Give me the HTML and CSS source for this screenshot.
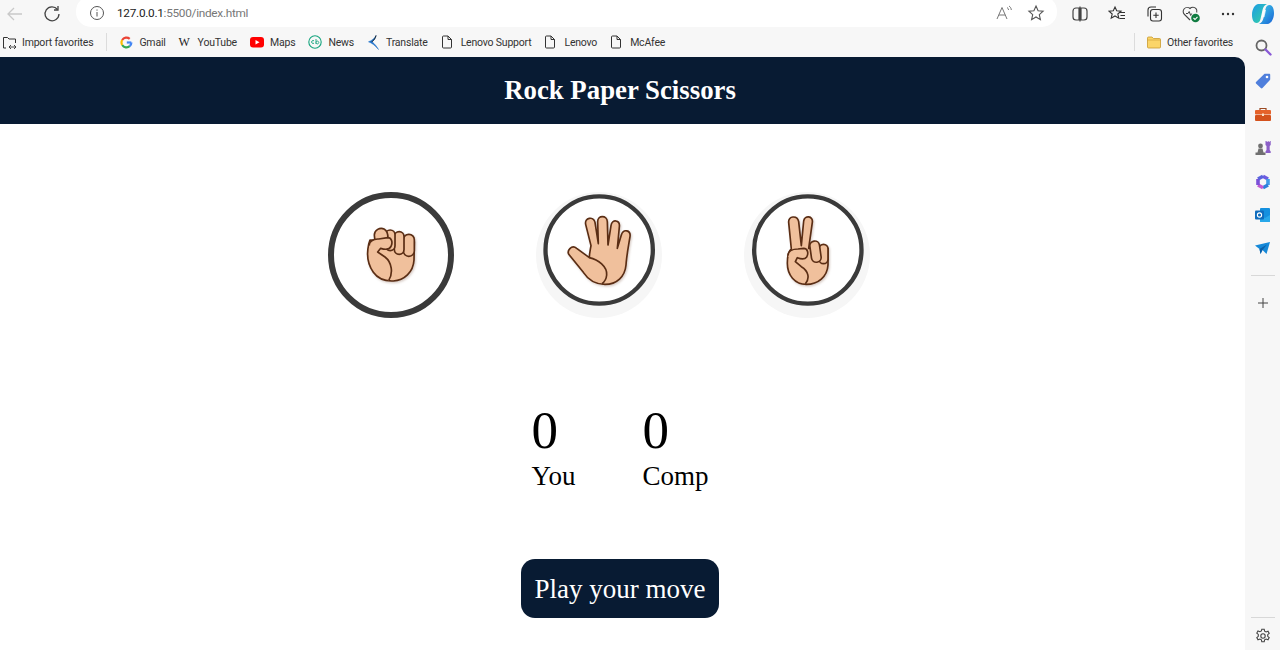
FILE: index.html
```html
<!DOCTYPE html>
<html>
<head>
  <title>Rock Paper Scissors</title>
  <link rel="stylesheet" href="styles.css">
</head>
<body>
  <!-- Browser toolbar -->
  <div class="toolbar">
    <div class="btn back">
      <svg width="18" height="18" viewBox="0 0 18 18" fill="none" stroke="#c9c9c9" stroke-width="1.3"><path d="M16 9H2M8 3L2 9l6 6"/></svg>
    </div>
    <div class="btn refresh">
      <svg width="18" height="18" viewBox="0 0 18 18" fill="none" stroke="#444" stroke-width="1.3"><path d="M14.5 4.5A7 7 0 1 0 16 9"/><path d="M15 1v4h-4"/></svg>
    </div>
    <div class="address">
      <svg class="info" width="18" height="18" viewBox="0 0 18 18" fill="none" stroke="#555" stroke-width="1"><circle cx="9" cy="9" r="6.5"/><path d="M9 8v4.500M9 5.500v1.200"/></svg>
      <span class="url"><span class="host">127.0.0.1</span>:5500/index.html</span>
      <div class="address-end">
        <div class="btn read">
          <svg width="18" height="18" viewBox="0 0 18 18" fill="none" stroke="#777" stroke-width="1"><path d="M2 15L7 3.500 12 15M3.800 11h6.400"/><path d="M12 3.500c1 .6 1.500 1.300 1.600 2.500M14 2c1.400 1 2.200 2.200 2.300 4"/></svg>
        </div>
        <div class="btn star">
          <svg width="18" height="18" viewBox="0 0 18 18" fill="none" stroke="#555" stroke-width="1.100"><path d="M9 2l2.100 4.700 5 .5-3.800 3.400 1.100 5L9 13l-4.400 2.600 1.100-5L1.900 7.200l5-.5z"/></svg>
        </div>
      </div>
    </div>
    <div class="btn">
      <svg width="18" height="18" viewBox="0 0 18 18" fill="none" stroke="#444" stroke-width="1.200"><path d="M8 3H5a3 3 0 0 0-3 3v6a3 3 0 0 0 3 3h3zM10 3h3a3 3 0 0 1 3 3v6a3 3 0 0 1-3 3h-3zM9 1.500v15"/></svg>
    </div>
    <div class="btn">
      <svg width="18" height="18" viewBox="0 0 18 18" fill="none" stroke="#333" stroke-width="1.100"><path d="M7 2l1.700 3.800 4.300.4-3.200 2.800 1 4.200L7 11l-3.800 2.200 1-4.200L1 6.200l4.300-.4z"/><path d="M12 7.500h5M12.500 10.500h4.500M11.500 13.500h5.500"/></svg>
    </div>
    <div class="btn">
      <svg width="18" height="18" viewBox="0 0 18 18" fill="none" stroke="#333" stroke-width="1.100"><path d="M3 11.500V5a3 3 0 0 1 3-3h5"/><rect x="5.500" y="4.500" width="11" height="11.500" rx="2.500"/><path d="M11 7.500v5.500M8.300 10.200h5.400"/></svg>
    </div>
    <div class="btn">
      <svg width="20" height="20" viewBox="0 0 20 20"><path d="M9 16L3.500 10.500a4 4 0 0 1 5.500-6 4 4 0 0 1 6 .2c1 1.200 1.100 2.500.7 3.800" fill="none" stroke="#444" stroke-width="1.100"/><path d="M5 9.500h2l1.200-2 1.500 4 1-2" fill="none" stroke="#444" stroke-width="1"/><circle cx="14.500" cy="14" r="4.300" fill="#107c41"/><path d="M12.500 14l1.500 1.500 2.500-2.700" fill="none" stroke="#fff" stroke-width="1.100"/></svg>
    </div>
    <div class="btn">
      <svg width="16" height="4" viewBox="0 0 16 4" fill="#333"><circle cx="3" cy="2" r="1.200"/><circle cx="8" cy="2" r="1.200"/><circle cx="13" cy="2" r="1.200"/></svg>
    </div>
    <div class="btn copilot">
      <svg width="22" height="22" viewBox="0 0 22 22">
        <defs>
          <linearGradient id="cop-a" x1="0" y1="0" x2="1" y2="1"><stop offset="0" stop-color="#1c9be6"/><stop offset="1" stop-color="#37d6a0"/></linearGradient>
          <linearGradient id="cop-b" x1="0" y1="0" x2="1" y2="1"><stop offset="0" stop-color="#3fd0e8"/><stop offset="1" stop-color="#1a62d6"/></linearGradient>
        </defs>
        <path d="M6.500 1H15c-2.500 1-3.800 3-4.500 6L8.500 16c-.5 2.500-2 4-4 4C2 20 0 17 0 12 0 6 3 1 6.500 1z" fill="url(#cop-a)"/>
        <path d="M15.500 21H7c2.500-1 3.800-3 4.500-6l2-9c.5-2.500 2-4 4-4 2.500 0 4.500 3 4.500 8 0 6-3 11-6.500 11z" fill="url(#cop-b)"/>
        <path d="M11 7l3 0-1.500 7-3 .5z" fill="#fff" opacity=".75"/>
      </svg>
    </div>
  </div>

  <div class="window">
    <div class="content">
      <!-- Favorites bar -->
      <div class="bookmarks">
        <div class="mark import">
          <svg width="15" height="15" viewBox="0 0 15 15" fill="none" stroke="#333" stroke-width="1"><path d="M4 13H1.500V2.500h4l1.500 1.500h6.500v4"/><path d="M7 12h7M9 10l-2 2 2 2M12 10l2 2-2 2" stroke-width=".9"/></svg>
          <span>Import favorites</span>
        </div>
        <div class="divider"></div>
        <div class="mark">
          <svg width="13" height="13" viewBox="0 0 13 13" fill="none" stroke-width="2.200"><path d="M11.300 6.500H6.800" stroke="#4285f4"/><path d="M11.400 6.500a5 5 0 0 1-1.700 3.700" stroke="#4285f4"/><path d="M9.700 10.200A5 5 0 0 1 2.200 9" stroke="#34a853"/><path d="M2.200 9a5 5 0 0 1 0-5" stroke="#fbbc05"/><path d="M2.200 4a5 5 0 0 1 7.500-1.200" stroke="#ea4335"/></svg>
          <span>Gmail</span>
        </div>
        <div class="mark">
          <span class="wiki">W</span>
          <span>YouTube</span>
        </div>
        <div class="mark">
          <svg width="14" height="11" viewBox="0 0 14 11"><rect width="14" height="10.500" rx="3" fill="#f00"/><path d="M5.500 3v4.500L9.500 5.200z" fill="#fff"/></svg>
          <span>Maps</span>
        </div>
        <div class="mark">
          <svg width="14" height="14" viewBox="0 0 14 14" fill="none" stroke="#16a57e" stroke-width="1.100"><circle cx="7" cy="7" r="6.200"/><path d="M6 5.800a1.500 1.500 0 1 0 0 2.400M8 4v5M8 7.300a1.400 1.400 0 1 1 0 .4" stroke-width=".9"/></svg>
          <span>News</span>
        </div>
        <div class="mark">
          <svg width="13" height="15" viewBox="0 0 13 15"><path d="M9 .5C7.500 3.500 5 5.500 1.500 6.800 5 8 8 10.500 11.500 14.500 8.500 9.500 6.500 8 5 6.800 7 5.500 8.500 3.500 9 .5z" fill="#1b6fc9" stroke="#1b6fc9" stroke-width=".5"/><path d="M9 .5C8.500 3 7 5 5 6.800" fill="none" stroke="#222" stroke-width="1"/></svg>
          <span>Translate</span>
        </div>
        <div class="mark doc">
          <svg width="12" height="14" viewBox="0 0 12 14" fill="none" stroke="#333" stroke-width="1"><path d="M1.500 2a1 1 0 0 1 1-1H7l3.500 3.500V12a1 1 0 0 1-1 1h-7a1 1 0 0 1-1-1zM7 1v3.500h3.500"/></svg>
          <span>Lenovo Support</span>
        </div>
        <div class="mark doc">
          <svg width="12" height="14" viewBox="0 0 12 14" fill="none" stroke="#333" stroke-width="1"><path d="M1.500 2a1 1 0 0 1 1-1H7l3.500 3.500V12a1 1 0 0 1-1 1h-7a1 1 0 0 1-1-1zM7 1v3.500h3.500"/></svg>
          <span>Lenovo</span>
        </div>
        <div class="mark doc">
          <svg width="12" height="14" viewBox="0 0 12 14" fill="none" stroke="#333" stroke-width="1"><path d="M1.500 2a1 1 0 0 1 1-1H7l3.500 3.500V12a1 1 0 0 1-1 1h-7a1 1 0 0 1-1-1zM7 1v3.500h3.500"/></svg>
          <span>McAfee</span>
        </div>
        <div class="others">
          <div class="divider"></div>
          <div class="mark">
            <svg width="14" height="13" viewBox="0 0 14 13"><path d="M.5 2a1 1 0 0 1 1-1h3.500l1.500 1.500h6a1 1 0 0 1 1 1V11a1 1 0 0 1-1 1h-11a1 1 0 0 1-1-1z" fill="#fbd568" stroke="#c99b2f" stroke-width=".8"/><path d="M.5 4h13" stroke="#c99b2f" stroke-width=".6"/></svg>
            <span>Other favorites</span>
          </div>
        </div>
      </div>

      <!-- The game page -->
      <div class="page">
        <div class="page-title">Rock Paper Scissors</div>

        <div class="choices">
          <div class="choice">
            <svg width="126" height="126" viewBox="24 21 378 378">
              <circle cx="213" cy="210" r="180" fill="#fff" stroke="#3a3a3a" stroke-width="18"/>
              <g class="hand">
                <path d="M146 178C140 205 143 238 160 262 175 283 198 289 220 288 252 286 280 262 282 225L283 170 150 165z"/>
                <rect x="250" y="148" width="33" height="66" rx="16"/>
                <rect x="223" y="140" width="29" height="68" rx="14.500"/>
                <rect x="196" y="135" width="29" height="62" rx="14.500"/>
                <path d="M163 150C163 135 180 126 192 132 200 136 204 146 204 160L165 170z"/>
                <path d="M148 182C146 170 160 161 176 162L203 158C215 158 219 172 213 184 208 195 195 194 182 190L173 201 195 216C216 232 220 265 206 287"/>
              </g>
            </svg>
          </div>
          <div class="choice">
            <svg width="126" height="126" viewBox="18 21 378 378">
              <circle cx="207.500" cy="195" r="161" fill="#fff" stroke="#3a3a3a" stroke-width="13"/>
              <g class="hand">
                <path d="M183 182L167 118C163 98 190 92 195 112L205 176 203 110C203 90 231 90 232 110L234 180 243 122C246 101 271 104 268 126L262 190 274 150C280 130 303 135 300 155 296 180 290 210 288 240 285 275 260 298 225 298 195 298 175 285 160 262L118 210C108 198 125 178 140 190L178 218C178 205 181 195 183 182z"/>
                <path d="M178 218C205 224 232 245 230 270 229 282 222 292 215 297"/>
              </g>
            </svg>
          </div>
          <div class="choice">
            <svg width="126" height="126" viewBox="18 21 378 378">
              <circle cx="209.500" cy="195" r="161" fill="#fff" stroke="#3a3a3a" stroke-width="13"/>
              <g class="hand">
                <path d="M160 192L152 112C150 92 178 90 182 110L190 182 197 108C200 90 226 92 223 112L212 190 270 190 270 240C268 275 240 298 205 298 170 298 148 270 148 235 148 215 150 200 160 192z"/>
                <rect x="243" y="178" width="27" height="58" rx="13.500"/>
                <rect x="218" y="168" width="29" height="64" rx="14.500" transform="rotate(-8 232 200)"/>
                <path d="M150 212C150 198 165 192 180 192L197 190C210 190 212 206 206 216 200 224 188 222 178 218L172 230 190 245C212 258 216 280 202 297"/>
              </g>
            </svg>
          </div>
        </div>

        <div class="score-board">
          <div class="score">
            <div class="score-num">0</div>
            <div class="score-label">You</div>
          </div>
          <div class="score">
            <div class="score-num">0</div>
            <div class="score-label">Comp</div>
          </div>
        </div>

        <div class="message">Play your move</div>
      </div>
    </div>

    <!-- Edge sidebar -->
    <div class="sidebar">
      <div class="side-btn">
        <svg width="18" height="18" viewBox="0 0 18 18" fill="none"><circle cx="7.500" cy="7.500" r="5" stroke="#666" stroke-width="1.800"/><path d="M11.500 11.500l5 5" stroke="#8a5ad6" stroke-width="2.400" stroke-linecap="round"/></svg>
      </div>
      <div class="side-btn">
        <svg width="16" height="16" viewBox="0 0 16 16"><path d="M1 9L9 1.200c.4-.3.800-.4 1.200-.4h4c.6 0 1 .4 1 1v4.400c0 .4-.2.800-.5 1L7.500 15c-.5.500-1.200.5-1.700 0L1 10.500c-.4-.4-.4-1.100 0-1.500z" fill="#4f7fdc"/><circle cx="12" cy="4" r="1.300" fill="#fff"/></svg>
      </div>
      <div class="side-btn">
        <svg width="16" height="14" viewBox="0 0 16 14"><path d="M5 3V1.500h6V3" fill="none" stroke="#9c4a22" stroke-width="1.200"/><rect y="3" width="16" height="4.500" rx="1" fill="#e5622a"/><rect y="8" width="16" height="6" rx="1" fill="#d4521d"/><rect x="7" y="6.500" width="2" height="2.500" fill="#fbe3c8"/></svg>
      </div>
      <div class="side-btn">
        <svg width="16" height="16" viewBox="0 0 16 16"><circle cx="5.500" cy="6" r="2.400" fill="#707070"/><path d="M3.500 8.500h4l1 4h-6zM.5 12.500h10V15H.5z" fill="#707070"/><path d="M10.500 1h1.200v1h1v-1h1v1h1v-1h1v4l-1 1v4l1 1.500V13h-5.200v-1.500l1-1.500V6l-1-1z" fill="#8b5fc7"/></svg>
      </div>
      <div class="side-btn">
        <svg width="16" height="16" viewBox="0 0 16 16" fill="none" stroke-width="3.600"><path d="M8 2.200L13 5" stroke="#6d5ce0"/><path d="M13 5v6" stroke="#3f9be8"/><path d="M13 11l-5 2.800" stroke="#2f7fdc"/><path d="M8 13.800L3 11" stroke="#c15bd3"/><path d="M3 11V5" stroke="#7b50d8"/><path d="M3 5l5-2.800" stroke="#5a63dd"/></svg>
      </div>
      <div class="side-btn">
        <svg width="16" height="16" viewBox="0 0 16 16"><rect x="5" y="1" width="10" height="14" rx="1" fill="#1490df"/><path d="M5 8l5 3 5-3v6a1 1 0 0 1-1 1H6a1 1 0 0 1-1-1z" fill="#28a8ea"/><rect y="3.500" width="9" height="9" rx="1" fill="#0f6cbd"/><circle cx="4.500" cy="8" r="2.100" fill="none" stroke="#fff" stroke-width="1.100"/></svg>
      </div>
      <div class="side-btn">
        <svg width="15" height="13" viewBox="0 0 15 13"><path d="M0 3.500L15 0l-3.500 12L7.500 8 5.500 12 4.500 7z" fill="#1689d8"/><path d="M4.500 7L12 2.500 7.500 8l-2 4z" fill="#0c5fa8"/></svg>
      </div>
      <div class="side-line"></div>
      <div class="side-btn plus">
        <svg width="12" height="12" viewBox="0 0 12 12" stroke="#444" stroke-width="1"><path d="M6 1v10M1 6h10"/></svg>
      </div>
      <div class="side-bottom">
        <div class="side-line"></div>
        <div class="side-btn gear">
          <svg width="16" height="16" viewBox="0 0 16 16" fill="none" stroke="#444" stroke-width="1.100"><circle cx="8" cy="8" r="2.200"/><path d="M6.800 1.200h2.400l.4 2 1.500.8 1.900-.7 1.200 2.100-1.500 1.300v1.600l1.500 1.300-1.200 2.100-1.900-.7-1.500.8-.4 2H6.800l-.4-2-1.500-.8-1.900.7-1.200-2.100 1.500-1.300V6.400L1.800 5.100 3 3l1.900.7 1.500-.8z"/></svg>
        </div>
      </div>
    </div>
  </div>
</body>
</html>
```

FILE: styles.css
```css
* {
  box-sizing: border-box;
}

body {
  margin: 0;
  height: 650px;
  overflow: hidden;
  display: flex;
  flex-direction: column;
  background: #f7f7f7;
  font-family: Roboto, "Noto Sans", sans-serif;
  color: #333;
}

/* Browser chrome */
.toolbar {
  display: flex;
  align-items: center;
  height: 27px;
  overflow: hidden;
  flex-shrink: 0;
}

.btn {
  display: flex;
  align-items: center;
  justify-content: center;
  width: 37px;
  height: 25px;
  flex-shrink: 0;
}

.back {
  width: 30px;
}

.refresh {
  width: 44px;
}

.copilot {
  width: 33px;
}

.address {
  display: flex;
  align-items: center;
  width: 981px;
  height: 31px;
  margin: -4px 4px 0 2px;
  padding: 3px 5px 0 12px;
  background: #fff;
  border-radius: 15px;
}

.info {
  margin-right: 11px;
}

.url {
  font-size: 11.800px;
  letter-spacing: -0.280px;
  color: #777;
}

.host {
  color: #222;
}

.address-end {
  display: flex;
  margin-left: auto;
}

.read {
  width: 33px;
}

.star {
  width: 32px;
}

.window {
  display: flex;
  flex: 1;
  min-height: 0;
}

.content {
  display: flex;
  flex-direction: column;
  width: 1245px;
}

/* Favorites bar */
.bookmarks {
  display: flex;
  align-items: center;
  gap: 13px;
  height: 30px;
  padding-left: 2px;
  font-size: 10.500px;
  letter-spacing: -0.200px;
}

.mark {
  display: flex;
  align-items: center;
  gap: 6px;
}

.import {
  gap: 5px;
}

.doc {
  gap: 8px;
}

.wiki {
  width: 13px;
  font-family: "Liberation Serif", serif;
  font-size: 12px;
  color: #222;
}

.divider {
  width: 1px;
  height: 18px;
  background: #dcdcdc;
}

.others {
  display: flex;
  align-items: center;
  gap: 12px;
  margin-left: auto;
  margin-right: 12px;
}

/* Game page */
.page {
  display: flex;
  flex-direction: column;
  align-items: center;
  flex: 1;
  padding-right: 5px;
  background: #fff;
  border-top-right-radius: 10px;
  overflow: hidden;
  font-family: "Liberation Serif", serif;
  color: #000;
}

.page-title {
  align-self: stretch;
  height: 67px;
  margin-right: -5px;
  padding: 17px 5px 0 0;
  background: #081b33;
  color: #fff;
  font-size: 26.800px;
  font-weight: bold;
  line-height: 33px;
  text-align: center;
}

.choices {
  display: flex;
  gap: 82px;
  margin-top: 68px;
  padding-right: 42px;
}

.choice {
  width: 126px;
  height: 126px;
  border-radius: 50%;
  background: #f6f6f6;
}

.choice svg {
  display: block;
}

.hand {
  fill: #f0c09c;
  stroke: #5a2d14;
  stroke-width: 5;
  stroke-linejoin: round;
  filter: drop-shadow(3px 4px 3px rgba(90, 45, 20, 0.25));
}

.score-board {
  display: flex;
  gap: 67px;
  margin-top: 82px;
}

.score-num {
  font-size: 53px;
  line-height: 60px;
}

.score-label {
  font-size: 27px;
  line-height: 32px;
}

.message {
  margin-top: 67px;
  padding: 15px 14px 13px;
  background: #081b33;
  border-radius: 14px;
  color: #fff;
  font-size: 27px;
  line-height: 31px;
}

/* Sidebar */
.sidebar {
  display: flex;
  flex-direction: column;
  align-items: center;
  flex: 1;
  padding-top: 3px;
}

.side-btn {
  display: flex;
  align-items: center;
  justify-content: center;
  height: 33.700px;
  width: 100%;
}

.side-line {
  width: 24px;
  height: 1px;
  margin-top: 9px;
  background: #d8d8d8;
}

.plus {
  margin-top: 10px;
}

.side-bottom {
  display: flex;
  flex-direction: column;
  align-items: center;
  width: 100%;
  margin-top: auto;
}

.gear {
  height: 32px;
  padding-top: 4px;
}
```
